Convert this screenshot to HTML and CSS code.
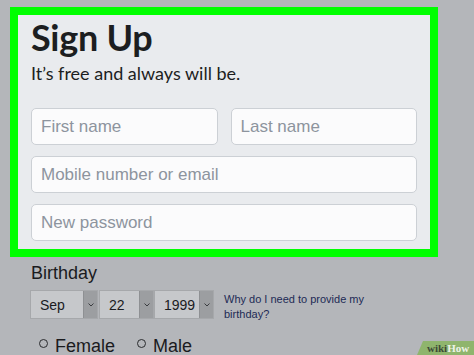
FILE: index.html
```html
<!DOCTYPE html>
<html lang="en">
<head>
    <meta charset="UTF-8">
    <title>Sign Up</title>
    <link rel="stylesheet" href="styles.css">
</head>
<body>
<div class="page">
    <div class="signup">
        <h1 class="title">Sign Up</h1>
        <p class="sub">It’s free and always will be.</p>
        <div class="row">
            <input class="field" type="text" placeholder="First name">
            <input class="field" type="text" placeholder="Last name">
        </div>
        <input class="field" type="text" placeholder="Mobile number or email">
        <input class="field" type="password" placeholder="New password">
    </div>

    <div class="birthday">
        <div class="label">Birthday</div>
        <div class="bday-row">
            <div class="select sel-month"><span>Sep</span><i class="arrow"><svg width="6" height="4" viewBox="0 0 6 4"><path d="M0.5 0.5 L3 3 L5.5 0.5" fill="none" stroke="#3a3c40" stroke-width="1"/></svg></i></div>
            <div class="select sel-day"><span>22</span><i class="arrow"><svg width="6" height="4" viewBox="0 0 6 4"><path d="M0.5 0.5 L3 3 L5.5 0.5" fill="none" stroke="#3a3c40" stroke-width="1"/></svg></i></div>
            <div class="select sel-year"><span>1999</span><i class="arrow"><svg width="6" height="4" viewBox="0 0 6 4"><path d="M0.5 0.5 L3 3 L5.5 0.5" fill="none" stroke="#3a3c40" stroke-width="1"/></svg></i></div>
            <a class="why" href="#">Why do I need to provide my birthday?</a>
        </div>
        <div class="gender">
            <label class="radio"><span class="dot"></span>Female</label>
            <label class="radio"><span class="dot"></span>Male</label>
        </div>
    </div>

    <div class="badge"><b class="wiki">wiki</b><b class="how">How</b></div>
</div>
</body>
</html>
```

FILE: styles.css
```css
html, body{
    margin: 0;
    padding: 0;
}
body{
    background: #b4b6ba;
    font-family: "Liberation Sans", Arial, sans-serif;
    color: #1c1e21;
}
.page{
    width: 474px;
    height: 355px;
    position: relative;
    overflow: hidden;
    padding-top: 7px;
    box-sizing: border-box;
}
.signup{
    margin-left: 10px;
    width: 428px;
    height: 250px;
    box-sizing: border-box;
    border: 8px solid #00ff00;
    background: #e9ebee;
    padding: 0 13px;
    display: flex;
    flex-direction: column;
    gap: 11px;
}
.title{
    margin: 0;
    font-family: Lato, "Open Sans", sans-serif;
    font-weight: 700;
    font-size: 36px;
    line-height: 44px;
    color: #1c1e21;
    letter-spacing: -0.3px;
}
.sub{
    margin: -9px 0 12px;
    font-family: Lato, "Open Sans", sans-serif;
    font-size: 18px;
    line-height: 24px;
    color: #1c1e21;
}
.row{
    display: flex;
    gap: 13px;
}
.row .field{
    flex: 1;
    min-width: 0;
}
.field{
    display: block;
    height: 37px;
    box-sizing: border-box;
    border: 1px solid #ccd0d5;
    border-radius: 5px;
    background: #fbfbfc;
    padding: 0 9px;
    font-family: "Liberation Sans", Arial, sans-serif;
    font-size: 17px;
    color: #1c1e21;
    outline: none;
}
.field::placeholder{
    color: #8d949e;
}
.birthday{
    padding-left: 30px;
}
.label{
    font-size: 18px;
    line-height: 20px;
    margin-top: 6px;
    padding-left: 1px;
    color: #1a1b1e;
}
.bday-row{
    display: flex;
    align-items: flex-start;
    margin-top: 7px;
}
.select{
    height: 29px;
    box-sizing: border-box;
    border: 1px solid #a6a8ab;
    background: #c6c8cb;
    display: flex;
    align-items: stretch;
    font-size: 14px;
    color: #1a1b1e;
}
.select span{
    flex: 1;
    display: flex;
    align-items: center;
    padding-left: 9px;
}
.select .arrow{
    width: 13px;
    background: #9c9ea1;
    border-left: 1px solid #8e9093;
    display: flex;
    align-items: center;
    justify-content: center;
}
.sel-month{
    width: 68px;
}
.sel-day{
    width: 55px;
    margin-left: 1px;
}
.sel-year{
    width: 60px;
}
.why{
    margin-left: 10px;
    margin-top: 2px;
    width: 150px;
    font-size: 11px;
    line-height: 15px;
    color: #1d2a55;
    text-decoration: none;
}
.gender{
    display: flex;
    gap: 22px;
    margin-top: 14px;
    padding-left: 9px;
}
.radio{
    display: flex;
    align-items: center;
    font-size: 18px;
    line-height: 20px;
    color: #1a1b1e;
}
.radio .dot{
    width: 7px;
    height: 7px;
    border: 1px solid #2a2b2e;
    border-radius: 50%;
    margin-right: 7px;
    margin-top: -6px;
}
.badge{
    position: absolute;
    right: 0;
    bottom: 0;
    width: 57px;
    height: 14px;
    background: #8fb56d;
    clip-path: polygon(6px 0, 100% 0, 100% 100%, 0 100%);
    font-family: "Liberation Serif", serif;
    font-size: 11px;
    line-height: 14px;
    padding-left: 10px;
    box-sizing: border-box;
}
.wiki{
    color: #3d4a36;
}
.how{
    color: #eef3e8;
}
```
